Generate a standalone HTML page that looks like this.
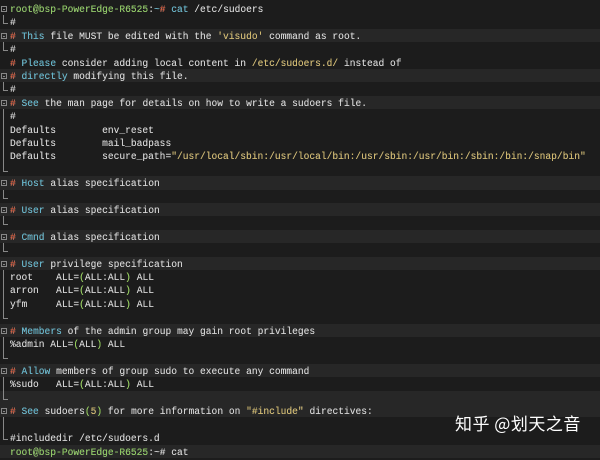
<!DOCTYPE html>
<html><head><meta charset="utf-8"><style>
body{margin:0;width:600px;height:449px;overflow:hidden;background:#1c1c1c;font-family:"Liberation Mono",monospace;font-size:9.6px;color:#d4d4d4;position:relative}
.l{position:absolute;left:0;width:600px;height:13.4px;line-height:13.4px;white-space:pre}
.l span.t{position:absolute;left:10px;top:1px;transform:scaleY(1.1);text-shadow:0 0 0.3px #d4d4d4}
.s{background:#272727}
.h{color:#e05a3a}.k{color:#5ab4cc}.g{color:#8fd14f}.y{color:#d2b866}.p{color:#89c95a}
.f{position:absolute;left:1px;width:6px;height:6px;border:1px solid #888;top:4px;box-sizing:border-box}
.f:after{content:"";position:absolute;left:1px;top:2px;width:2px;height:1px;background:#888}
.e{position:absolute;left:3px;top:0;width:4px;height:8px;border-left:1px solid #888;border-bottom:1px solid #888}
.v{position:absolute;left:3px;top:0;height:13.4px;border-left:1px solid #888}
.wm{position:absolute;left:455px;top:410px;color:#fff;font-family:"Noto Sans CJK SC",sans-serif;font-size:17px;letter-spacing:0.5px}
</style></head><body>
<div class="l" style="top:2px"><i class="f"></i><span class="t"><span class="p">root@bsp-PowerEdge-R6525</span>:<span class="k">~</span><span class="h">#</span> <span class="k">cat</span> /etc/sudoers</span></div>
<div class="l" style="top:15.4px"><i class="e"></i><span class="t">#</span></div>
<div class="l s" style="top:28.8px"><i class="f"></i><span class="t"><span class="h">#</span> <span class="k">This</span> file MUST be edited with the <span class="y">'visudo'</span> command as root.</span></div>
<div class="l" style="top:42.2px"><i class="e"></i><span class="t">#</span></div>
<div class="l" style="top:55.6px"><span class="t"><span class="h">#</span> <span class="k">Please</span> consider adding local content in <span class="y">/etc/sudoers.d/</span> instead of</span></div>
<div class="l s" style="top:69px"><i class="f"></i><span class="t"><span class="h">#</span> <span class="k">directly</span> modifying this file.</span></div>
<div class="l" style="top:82.4px"><i class="e"></i><span class="t">#</span></div>
<div class="l s" style="top:95.8px"><i class="f"></i><span class="t"><span class="h">#</span> <span class="k">See</span> the man page for details on how to write a sudoers file.</span></div>
<div class="l" style="top:109.2px"><i class="v"></i><span class="t">#</span></div>
<div class="l" style="top:122.6px"><i class="v"></i><span class="t">Defaults        env_reset</span></div>
<div class="l" style="top:136px"><i class="v"></i><span class="t">Defaults        mail_badpass</span></div>
<div class="l" style="top:149.4px"><i class="v"></i><span class="t">Defaults        secure_path=<span class="y">"/usr/local/sbin:/usr/local/bin:/usr/sbin:/usr/bin:/sbin:/bin:/snap/bin"</span></span></div>
<div class="l" style="top:162.8px"><i class="e"></i></div>
<div class="l s" style="top:176.2px"><i class="f"></i><span class="t"><span class="h">#</span> <span class="k">Host</span> alias specification</span></div>
<div class="l" style="top:189.6px"><i class="e"></i></div>
<div class="l s" style="top:203px"><i class="f"></i><span class="t"><span class="h">#</span> <span class="k">User</span> alias specification</span></div>
<div class="l" style="top:216.4px"><i class="e"></i></div>
<div class="l s" style="top:229.8px"><i class="f"></i><span class="t"><span class="h">#</span> <span class="k">Cmnd</span> alias specification</span></div>
<div class="l" style="top:243.2px"><i class="e"></i></div>
<div class="l s" style="top:256.6px"><i class="f"></i><span class="t"><span class="h">#</span> <span class="k">User</span> privilege specification</span></div>
<div class="l" style="top:270px"><i class="v"></i><span class="t">root    ALL=<span class="g">(</span>ALL:ALL<span class="g">)</span> ALL</span></div>
<div class="l" style="top:283.4px"><i class="v"></i><span class="t">arron   ALL=<span class="g">(</span>ALL:ALL<span class="g">)</span> ALL</span></div>
<div class="l" style="top:296.8px"><i class="v"></i><span class="t">yfm     ALL=<span class="g">(</span>ALL:ALL<span class="g">)</span> ALL</span></div>
<div class="l" style="top:310.2px"><i class="e"></i></div>
<div class="l s" style="top:323.6px"><i class="f"></i><span class="t"><span class="h">#</span> <span class="k">Members</span> of the admin group may gain root privileges</span></div>
<div class="l" style="top:337px"><i class="v"></i><span class="t">%admin ALL=<span class="g">(</span>ALL<span class="g">)</span> ALL</span></div>
<div class="l" style="top:350.4px"><i class="e"></i></div>
<div class="l s" style="top:363.8px"><i class="f"></i><span class="t"><span class="h">#</span> <span class="k">Allow</span> members of group sudo to execute any command</span></div>
<div class="l" style="top:377.2px"><i class="v"></i><span class="t">%sudo   ALL=<span class="g">(</span>ALL:ALL<span class="g">)</span> ALL</span></div>
<div class="l s" style="top:390.6px"><i class="e"></i></div>
<div class="l s" style="top:404px"><i class="f"></i><span class="t"><span class="h">#</span> <span class="k">See</span> sudoers<span class="g">(</span><span class="y">5</span><span class="g">)</span> for more information on <span class="y">"#include"</span> directives:</span></div>
<div class="l" style="top:417.4px"><i class="v"></i></div>
<div class="l" style="top:430.8px"><i class="e"></i><span class="t">#includedir /etc/sudoers.d</span></div>
<div class="l s" style="top:445px"><span class="t"><span class="p">root@bsp-PowerEdge-R6525</span>:~# cat</span></div>
<div class="wm">知乎 @划天之音</div>
</body></html>
